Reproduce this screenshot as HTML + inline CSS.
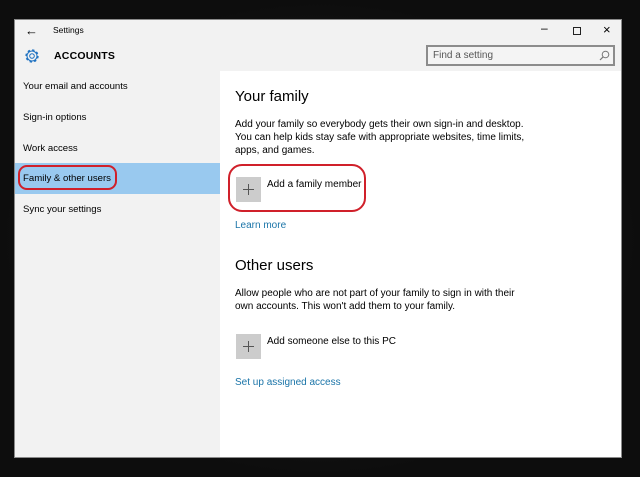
<!DOCTYPE html>
<html><head><meta charset="utf-8"><style>
*{margin:0;padding:0;box-sizing:border-box}
body{width:640px;height:477px;overflow:hidden;background:radial-gradient(ellipse at 50% 50%,#2a2a2a,#0d0d0d 70%);font-family:"Liberation Sans",sans-serif;position:relative}
.win{position:absolute;left:14px;top:19px;width:608px;height:439px;background:#f2f2f2;border:1px solid #8a8a8a;overflow:hidden}
.t{position:absolute;font-size:11px;color:#000;white-space:nowrap}
.content{position:absolute;left:205px;top:51px;right:0;bottom:0;background:#fff}
.sel{position:absolute;left:0;top:143px;width:205px;height:31px;background:#99c9ef}
.red{position:absolute;border:2px solid #d0202a;border-radius:9px}
.plus{position:absolute;width:25px;height:25px;background:#ccc}
.plus:before,.plus:after{content:"";position:absolute;background:#555;left:7px;top:12px;width:11px;height:1px}
.plus:after{left:12px;top:7px;width:1px;height:11px}
.h{position:absolute;font-size:15px;color:#000}
.p{position:absolute;font-size:10px;color:#000;line-height:13px;white-space:nowrap}
.link{position:absolute;font-size:10px;color:#1a74a8}
.n{font-size:9.6px}
</style></head><body>
<div class="win">
<div class="t" style="left:10px;top:3px;font-size:13px">&#8592;</div>
<div class="t" style="left:38px;top:5px;font-size:8.5px">Settings</div>
<div class="t" style="left:526px;top:1px;font-size:12px">&#8211;</div>
<div style="position:absolute;left:558px;top:7px;width:8px;height:8px;border:1px solid #222"></div>
<div class="t" style="left:588px;top:2px;font-size:13px">&#215;</div>
<svg style="position:absolute;left:8px;top:27px" width="18" height="18" viewBox="0 0 18 18"><circle cx="9" cy="9" r="6" fill="none" stroke="#1a6fc0" stroke-width="1.3" stroke-dasharray="2.4 2.3"/><circle cx="9" cy="9" r="5" fill="none" stroke="#1a6fc0" stroke-width="1"/><circle cx="9" cy="9" r="2.3" fill="none" stroke="#1a6fc0" stroke-width="1"/></svg>
<div class="t" style="left:39px;top:30px;font-size:10.5px;font-weight:bold;letter-spacing:.2px">ACCOUNTS</div>
<div style="position:absolute;left:411px;top:25px;width:189px;height:21px;border:2px solid #8c8c8c;background:#f4f4f4"></div>
<div class="t" style="left:418px;top:30px;font-size:10px;color:#555">Find a setting</div>
<svg style="position:absolute;left:584px;top:30px" width="11" height="11" viewBox="0 0 11 11"><circle cx="6.5" cy="4.5" r="3.3" fill="none" stroke="#777" stroke-width="1"/><path d="M4.2 6.8L1 10" stroke="#777" stroke-width="1.2"/></svg>
<div class="sel"></div>
<div class="t n" style="left:8px;top:61px">Your email and accounts</div>
<div class="t n" style="left:8px;top:92px">Sign-in options</div>
<div class="t n" style="left:8px;top:123px">Work access</div>
<div class="t n" style="left:8px;top:153px">Family &amp; other users</div>
<div class="red" style="left:3px;top:145px;width:99px;height:25px"></div>
<div class="t n" style="left:8px;top:184px">Sync your settings</div>
<div class="content">
<div class="h" style="left:15px;top:17px">Your family</div>
<div class="p" style="left:15px;top:47px">Add your family so everybody gets their own sign-in and desktop.<br>You can help kids stay safe with appropriate websites, time limits,<br>apps, and games.</div>
<div class="plus" style="left:16px;top:106px"></div>
<div class="p" style="left:47px;top:107px">Add a family member</div>
<div class="red" style="left:8px;top:93px;width:138px;height:48px;border-radius:14px"></div>
<div class="link" style="left:15px;top:149px">Learn more</div>
<div class="h" style="left:15px;top:186px">Other users</div>
<div class="p" style="left:15px;top:216px">Allow people who are not part of your family to sign in with their<br>own accounts. This won't add them to your family.</div>
<div class="plus" style="left:16px;top:263px"></div>
<div class="p" style="left:47px;top:264px">Add someone else to this PC</div>
<div class="link" style="left:15px;top:306px">Set up assigned access</div>
</div>
</div>
</body></html>
